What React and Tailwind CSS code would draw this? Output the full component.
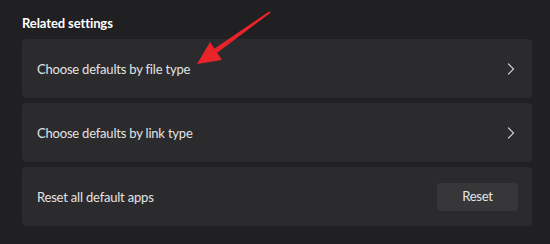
import React from "react";

const Chevron = () => (
  <svg width="8" height="12" viewBox="0 0 8 12" className="text-[#cfcfcf]">
    <path d="M1.5 1 L6.5 6 L1.5 11" fill="none" stroke="currentColor" strokeWidth="1.2" strokeLinecap="round" strokeLinejoin="round" />
  </svg>
);

const Row = ({ label, children }) => (
  <div className="h-[59px] rounded-[4px] bg-[#2b2b2d] flex items-center justify-between pl-[15px] pr-[14px]">
    <span className="mt-[2px] text-[13px] tracking-[-0.2px] text-[#e3e3e3]">{label}</span>
    {children}
  </div>
);

export default function App() {
  return (
    <div
      className="relative w-[550px] h-[244px] bg-[#202022] pl-[22px] pr-[18px] pt-[13px] overflow-hidden"
      style={{ fontFamily: 'Lato, "Noto Sans", sans-serif' }}
    >
      <h2 className="text-[13px] tracking-[-0.1px] font-bold text-white leading-[20px] mb-[6px]">Related settings</h2>
      <div className="flex flex-col gap-[5px]">
        <Row label="Choose defaults by file type">
          <span className="pr-[3px]"><Chevron /></span>
        </Row>
        <Row label="Choose defaults by link type">
          <span className="pr-[3px]"><Chevron /></span>
        </Row>
        <Row label="Reset all default apps">
          <button className="w-[81px] h-[28px] rounded-[4px] bg-[#373739] text-[13px] tracking-[-0.2px] text-[#e6e6e6] pt-[1px]">Reset</button>
        </Row>
      </div>
      <svg className="absolute left-0 top-0 pointer-events-none" width="550" height="244">
        <path d="M269.4 11.2 L270.6 12.8 L215.5 54 L212.5 50 Z" fill="#e8232a" />
        <path d="M197 64 L210 42 L222 60 Z" fill="#e8232a" />
      </svg>
    </div>
  );
}
